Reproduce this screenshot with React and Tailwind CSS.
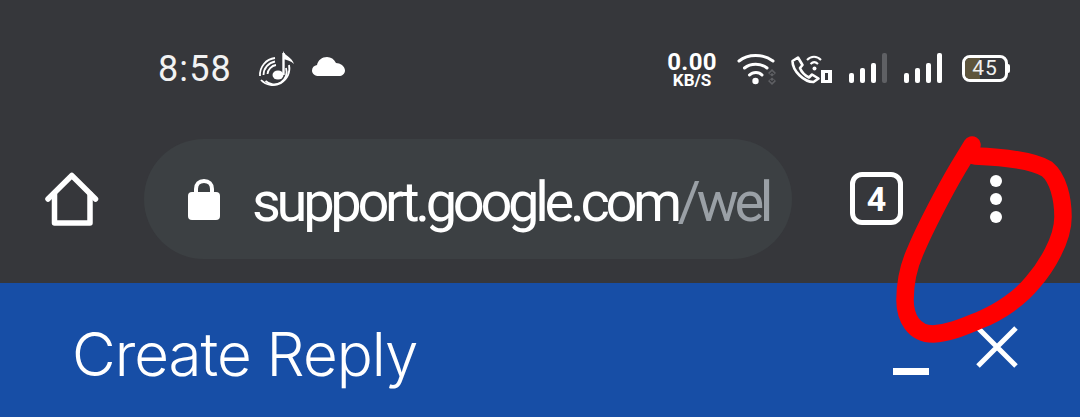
import React from "react";

const Bars = ({ lastDim }) => (
  <svg width="38" height="32" viewBox="0 0 38 32" fill="#fff">
    <rect x="0" y="20" width="5" height="10" rx="2" />
    <rect x="11" y="15" width="5" height="15" rx="2" />
    <rect x="22" y="10" width="5" height="20" rx="2" />
    <rect x="33" y="0" width="5" height="30" rx="2" fill={lastDim ? "#5f6064" : "#fff"} />
  </svg>
);

const MusicIcon = () => (
  <svg width="37" height="38" viewBox="0 0 37 38" fill="none" stroke="#fff" strokeWidth="1.8">
    <path d="M2 25A17 17 0 0 1 17 7" />
    <path d="M5.500 24A14 14 0 0 1 17 10.500" />
    <path d="M31 14A16.500 16.500 0 0 1 3 29" />
    <path d="M28 17A12.500 12.500 0 0 1 7.500 30" />
    <path d="M9.500 23A10 10 0 0 1 18 14" />
    <ellipse cx="20" cy="24" rx="5.500" ry="4.500" fill="#fff" stroke="none" />
    <path d="M25.500 24V2" strokeWidth="2.400" />
    <path d="M25 0C27 5 34 6 36 13C33 10 29 9 25 8Z" fill="#fff" stroke="none" />
  </svg>
);

const WifiIcon = () => (
  <svg width="42" height="34" viewBox="0 0 42 34" fill="none">
    <g stroke="#fff" strokeWidth="3" strokeLinecap="round">
      <path d="M2 9C11 1.500 26 1.500 36 9" />
      <path d="M7.500 16C13.500 11 24 11 30 16" />
      <path d="M12.500 23C16 19.500 22 19.500 25 23" />
    </g>
    <circle cx="18.500" cy="29" r="3.200" fill="#fff" />
    <path d="M31 21L35 17L39 21L35 24.500ZM31 29L35 33L39 29L35 25.500Z" fill="#5f6064" />
    <path d="M33 22L35 20L37 22M33 28L35 30L37 28" stroke="#36373b" strokeWidth="1.200" />
  </svg>
);

const CallIcon = () => (
  <svg width="42" height="30" viewBox="0 0 42 30" fill="none">
    <path
      d="M1.500 7L7 3.500L11.500 11L9 14C10.500 18 14 21.500 18 23.500L21 20.500L27.500 24.500L22.500 28C13 28 1.500 17 1.500 7Z"
      stroke="#fff"
      strokeWidth="2.600"
      strokeLinejoin="round"
    />
    <g stroke="#fff" strokeWidth="2">
      <path d="M16 6C20 1.500 26 1.500 30 6" />
      <path d="M19.500 10C22 7.500 24.500 7.500 27 10" />
    </g>
    <circle cx="23.500" cy="14.500" r="2" fill="#fff" />
    <rect x="30" y="16" width="11" height="13" fill="#fff" />
    <rect x="34" y="19" width="3" height="7" fill="#36373b" />
  </svg>
);

const Battery = () => (
  <div className="flex items-center">
    <div className="relative w-[46px] h-[27px] rounded-[8px] border-[3px] border-white overflow-hidden flex items-center justify-center">
      <div className="absolute left-0 top-0 bottom-0 w-[15px] bg-[#5e553c]" />
      <span className="relative text-[21px] leading-none text-[#f0f0f0] font-['Roboto',sans-serif] tracking-[1px]">45</span>
    </div>
    <div className="w-[2px] h-[9px] bg-white rounded-r" />
  </div>
);

const App = () => {
  return (
    <div className="relative w-[1080px] h-[417px] overflow-hidden bg-[#36373b] font-['Roboto',sans-serif] text-white">
      <div className="h-[139px] flex items-center pl-[158px] pr-[70px] pb-[2px]">
        <span className="text-[36px] leading-none text-[#f2f2f2] tracking-[1.1px]">8:58</span>
        <div className="ml-[26px] mt-[2px]">
          <MusicIcon />
        </div>
        <svg className="ml-[17px] mb-[4px]" width="33" height="19" viewBox="0 0 33 19" fill="#fff">
          <path d="M7 19C3 19 0 17 0 13.500C0 10.500 2 8.500 5 8C6 3 10 0 15 0C19 0 22 2 24 6C28 6 33 9 33 13.500C33 17 30 19 27 19Z" />
        </svg>
        <div className="ml-auto flex items-center">
          <div className="flex flex-col items-center mr-[20px] mt-[1px]">
            <span className="text-[24px] leading-[21px] font-bold tracking-[0.4px]">0.00</span>
            <span className="text-[17px] leading-[14px] font-bold">KB/S</span>
          </div>
          <WifiIcon />
          <div className="ml-[12px]">
            <CallIcon />
          </div>
          <div className="ml-[16px] mt-[1px]">
            <Bars lastDim />
          </div>
          <div className="ml-[17px] mt-[1px]">
            <Bars />
          </div>
          <div className="ml-[20px]">
            <Battery />
          </div>
        </div>
      </div>

      <div className="h-[144px] flex items-start pl-[45px]">
        <svg className="mt-[33px] shrink-0" width="56" height="56" viewBox="0 0 56 56" fill="none" stroke="#fff" strokeWidth="5.500" strokeLinejoin="round" strokeLinecap="round">
          <path d="M3 27L26.800 3.500L50.500 27" />
          <path d="M9.500 22V51H45V22" />
        </svg>
        <div className="ml-[43px] w-[648px] h-[120px] rounded-full bg-[#3c4043] flex items-center pl-[44px] pr-[20px]">
          <svg className="shrink-0" width="32" height="42" viewBox="0 0 32 42" fill="none">
            <path d="M8 18V11C8 6 11 3 16 3C21 3 24 6 24 11V18" stroke="#fff" strokeWidth="4" />
            <rect x="0" y="14" width="32" height="28" rx="4" fill="#fff" />
          </svg>
          <div className="ml-[32px] whitespace-nowrap text-[56px] leading-none tracking-[-4.3px] pt-[6px]">
            <span>support.google.com</span>
            <span className="text-[#9aa0a6]">/wel</span>
          </div>
        </div>
        <div className="ml-[58px] mt-[33px] w-[53px] h-[53px] rounded-[12px] border-[5px] border-white flex items-center justify-center text-[34px] font-bold leading-none">
          4
        </div>
        <div className="ml-[87px] mt-[36px] flex flex-col gap-[6px]">
          <div className="w-[12px] h-[12px] rounded-full bg-white" />
          <div className="w-[12px] h-[12px] rounded-full bg-white" />
          <div className="w-[12px] h-[12px] rounded-full bg-white" />
        </div>
      </div>

      <div className="h-[134px] bg-[#174ea6] flex items-center pl-[72px] pr-[62px]">
        <span className="text-[60px] leading-none font-['Inter',sans-serif] font-light tracking-[-1px] pt-[8px]">Create Reply</span>
        <div className="ml-auto w-[36px] h-[7px] bg-white mt-[42px]" />
        <svg className="ml-[47px] mb-[6px]" width="42" height="42" viewBox="0 0 42 42" stroke="#fff" strokeWidth="5">
          <path d="M2 2L40 40M40 2L2 40" />
        </svg>
      </div>

      <svg className="absolute inset-0" width="1080" height="417" viewBox="0 0 1080 417" fill="none">
        <path
          d="M972 145L958 168C945 190 925 228 915 252C908 268 905 285 905 300C905 318 914 334 933 334C950 333 965 326 980 320C1000 312 1020 298 1033 282C1046 267 1063 240 1063 217C1063 198 1058 178 1047 169C1032 160 1000 157 975 156"
          stroke="#ff0000"
          strokeWidth="17.500"
          strokeLinecap="round"
          strokeLinejoin="round"
        />
      </svg>
    </div>
  );
};

export default App;
